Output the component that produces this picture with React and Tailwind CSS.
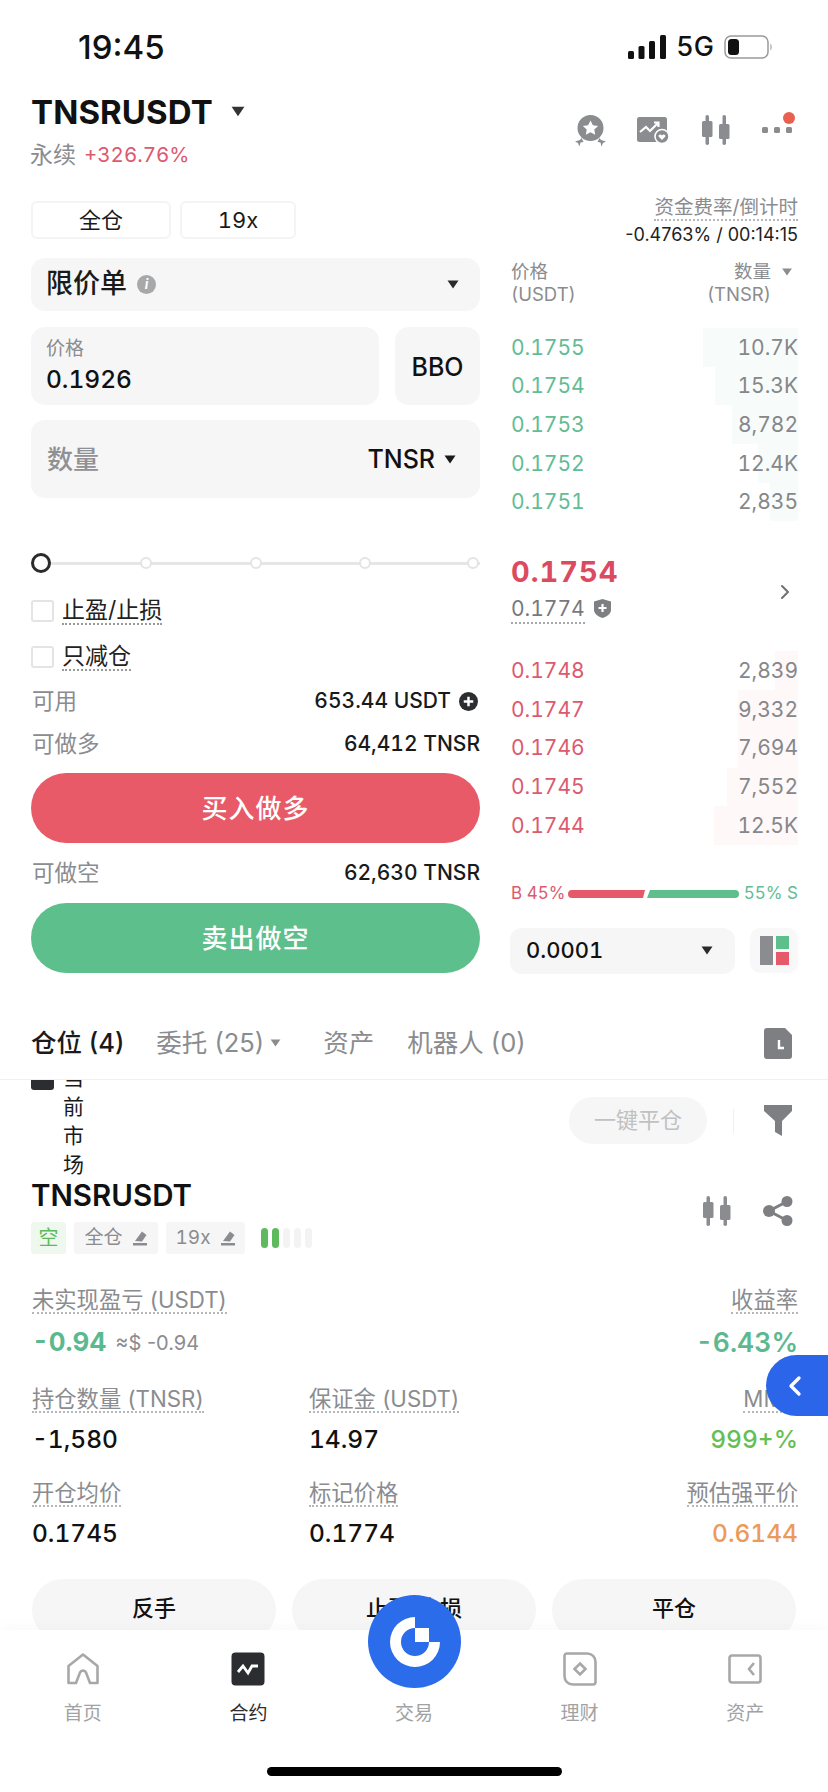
import { ChevronLeft, ChevronRight } from 'lucide-react';

const askRows = [
  ['0.1755', '10.7K', 'w-[95px]'],
  ['0.1754', '15.3K', 'w-[83px]'],
  ['0.1753', '8,782', 'w-[66px]'],
  ['0.1752', '12.4K', 'w-[40px]'],
  ['0.1751', '2,835', 'w-[28px]'],
];

const bidRows = [
  ['0.1748', '2,839', 'w-[23px]'],
  ['0.1747', '9,332', 'w-[60px]'],
  ['0.1746', '7,694', 'w-[60px]'],
  ['0.1745', '7,552', 'w-[71px]'],
  ['0.1744', '12.5K', 'w-[84px]'],
];

const Tri = ({ className }) => (
  <svg viewBox="0 0 12 9" className={className}>
    <path d="M0.5 0.5H11.5L6 8.5Z" fill="currentColor" />
  </svg>
);

const Candles = ({ className }) => (
  <svg viewBox="0 0 32 30" className={className} fill="#8a8c8f">
    <rect x="5.5" y="0" width="3.5" height="30" rx="1.7" />
    <rect x="2" y="6" width="10.5" height="16" rx="1.5" />
    <rect x="22.5" y="0" width="3.5" height="30" rx="1.7" />
    <rect x="19" y="9" width="10.5" height="15" rx="1.5" />
  </svg>
);

const Pen = () => (
  <svg viewBox="0 0 16 16" className="w-[16px] h-[16px]" fill="#8a8c8f">
    <path d="M3 11L10 1.5L14.5 5L10 11.5Z" />
    <rect x="1" y="13" width="14" height="2.5" />
  </svg>
);

const Label = ({ children }) => (
  <span className="h-[28px] inline-block leading-[27px] text-[22.3px] normal-nums text-[#8a8c8f] border-b-2 border-dotted border-[#b5b7ba]">
    {children}
  </span>
);

function StatusBar() {
  return (
    <div className="h-[88px] flex items-start justify-between pl-[78px] pr-[56px] pt-[27px]">
      <span className="text-[33px] leading-[40px] font-medium normal-nums text-[#111]">19:45</span>
      <div className="flex items-center gap-[10px] h-[40px]">
        <svg viewBox="0 0 38 24" className="w-[38px] h-[24px]" fill="#111">
          <rect x="0" y="16" width="6" height="8" rx="1.5" />
          <rect x="10.5" y="11" width="6" height="13" rx="1.5" />
          <rect x="21" y="6" width="6" height="18" rx="1.5" />
          <rect x="32" y="0" width="6" height="24" rx="1.5" />
        </svg>
        <span className="text-[27px] leading-[40px] font-medium text-[#111]">5G</span>
        <svg viewBox="0 0 48 24" className="w-[48px] h-[24px]">
          <rect x="1" y="1" width="43" height="22" rx="6" fill="none" stroke="#9a9a9a" strokeWidth="1.5" />
          <rect x="4" y="4" width="11" height="16" rx="3.5" fill="#111" />
          <path d="M46.5 8.5c1.5 1 1.5 6 0 7Z" fill="#9a9a9a" />
        </svg>
      </div>
    </div>
  );
}

function Header() {
  return (
    <div className="h-[108px] flex justify-between pl-[31px] pr-[36px]">
      <div className="pt-[1px]">
        <div className="flex items-center gap-[18px] h-[46px]">
          <span className="text-[33px] leading-[46px] font-bold text-[#111] tracking-[0.1px]">TNSRUSDT</span>
          <Tri className="w-[14px] h-[11px] text-[#333] -mt-[2px]" />
        </div>
        <div className="flex items-center gap-[8px] h-[40px] -ml-[1px]">
          <span className="text-[23px] text-[#8a8c8f]">永续</span>
          <span className="text-[20.5px] text-[#dc5a6e]">+326.76%</span>
        </div>
      </div>
      <div className="flex items-start pt-[25px]">
        <svg viewBox="0 0 33 33" className="w-[33px] h-[33px] mt-[2px]" fill="#8a8c8f">
          <circle cx="16.5" cy="13" r="13" />
          <path d="M16.5 5.5l2.4 4.8 5.2.7-3.8 3.6.9 5.2-4.7-2.5-4.7 2.5.9-5.2-3.8-3.6 5.2-.7Z" fill="#fff" />
          <path d="M1 26.5l5-1.5 1.5-2 2 4-3 .5-1 4-1.5-3.5ZM32 26.5l-5-1.5-1.5-2-2 4 3 .5 1 4 1.5-3.5Z" />
        </svg>
        <svg viewBox="0 0 33 27" className="w-[33px] h-[27px] ml-[30px] mt-[4px]">
          <rect x="0" y="0" width="30" height="25" rx="2.5" fill="#8a8c8f" />
          <path d="M3 15l6-5 4 4 8-8M17 5.5h4.5V10" fill="none" stroke="#fff" strokeWidth="2.2" />
          <circle cx="25" cy="19.5" r="7" fill="#8a8c8f" stroke="#fff" strokeWidth="1.6" />
          <path d="M25 23l-3.2-3.2c-1.2-1.6 1.6-3.2 3.2-1.4 1.6-1.8 4.4-.2 3.2 1.4Z" fill="#fff" />
        </svg>
        <Candles className="w-[32px] h-[30px] ml-[30px] mt-[2px]" />
        <div className="relative ml-[30px] w-[30px] h-[30px]">
          <div className="flex gap-[6px] mt-[14px]">
            <span className="w-[6px] h-[6px] rounded-[1.5px] bg-[#8a8c8f]" />
            <span className="w-[6px] h-[6px] rounded-[1.5px] bg-[#8a8c8f]" />
            <span className="w-[6px] h-[6px] rounded-[1.5px] bg-[#8a8c8f]" />
          </div>
          <span className="absolute left-[21px] -top-[1px] w-[12px] h-[12px] rounded-full bg-[#e8604f]" />
        </div>
      </div>
    </div>
  );
}

const Check = ({ children }) => (
  <div className="flex items-center h-[22px] gap-[8px]">
    <span className="w-[23px] h-[22px] rounded-[3px] border-2 border-[#e4e4e4] bg-white" />
    <span className="h-[27px] leading-[25px] text-[23px] text-[#222] border-b-2 border-dotted border-[#9a9a9a]">{children}</span>
  </div>
);

const InfoRow = ({ label, value, extra, className }) => (
  <div className={`flex items-center justify-between h-[30px] ${className}`}>
    <span className="text-[22.5px] text-[#8a8c8f] pl-[1px]">{label}</span>
    <div className="flex items-center gap-[8px]">
      <span className="text-[21px] font-medium text-[#1a1a1a]">{value}</span>
      {extra}
    </div>
  </div>
);

function OrderForm() {
  return (
    <div className="w-[449px] shrink-0 pt-[5px]">
      <div className="flex gap-[9px]">
        <div className="w-[140px] h-[38px] rounded-[6px] border-2 border-[#f4f4f4] flex items-center justify-center text-[22px] text-[#1a1a1a]">全仓</div>
        <div className="w-[116px] h-[38px] rounded-[6px] border-2 border-[#f4f4f4] flex items-center justify-center text-[22px] text-[#1a1a1a]">19x</div>
      </div>
      <div className="mt-[19px] h-[53px] rounded-[14px] bg-[#f6f6f6] flex items-center justify-between pl-[15px] pr-[21px]">
        <div className="flex items-center gap-[10px]">
          <span className="text-[27px] font-medium text-[#1a1a1a]">限价单</span>
          <span className="w-[19px] h-[19px] rounded-full bg-[#a6a8aa] text-white text-[13px] italic font-bold flex items-center justify-center">i</span>
        </div>
        <Tri className="w-[12px] h-[9px] text-[#2a2a2a]" />
      </div>
      <div className="mt-[16px] flex gap-[16px]">
        <div className="w-[348px] h-[78px] rounded-[14px] bg-[#f6f6f6] pl-[15px] pt-[9px]">
          <div className="text-[19px] leading-[26px] text-[#8a8c8f]">价格</div>
          <div className="mt-[2px] text-[24.5px] leading-[30px] font-medium text-[#111]">0.1926</div>
        </div>
        <div className="flex-1 h-[78px] pt-[3px] rounded-[14px] bg-[#f6f6f6] flex items-center justify-center text-[25px] font-medium text-[#111]">BBO</div>
      </div>
      <div className="mt-[15px] h-[78px] rounded-[14px] bg-[#f6f6f6] flex items-center justify-between pl-[16px] pr-[24px]">
        <span className="text-[26px] font-medium text-[#8f9194]">数量</span>
        <div className="flex items-center gap-[9px] pt-[1px]">
          <span className="text-[25px] font-medium text-[#111]">TNSR</span>
          <Tri className="w-[12px] h-[9px] text-[#1a1a1a]" />
        </div>
      </div>
      {/* slider */}
      <div className="relative mt-[55px] h-[20px] flex items-center">
        <div className="w-full h-[3px] bg-[#e6e6e6]" />
        <span className="absolute left-0 top-0 w-[20px] h-[20px] rounded-full border-[3px] border-[#2b2b2b] bg-white" />
        <span className="absolute left-[109px] top-[4px] w-[12px] h-[12px] rounded-full border-2 border-[#e4e4e4] bg-white" />
        <span className="absolute left-[219px] top-[4px] w-[12px] h-[12px] rounded-full border-2 border-[#e4e4e4] bg-white" />
        <span className="absolute left-[328px] top-[4px] w-[12px] h-[12px] rounded-full border-2 border-[#e4e4e4] bg-white" />
        <span className="absolute left-[436px] top-[4px] w-[12px] h-[12px] rounded-full border-2 border-[#e4e4e4] bg-white" />
      </div>
      <div className="mt-[27px]"><Check>止盈/止损</Check></div>
      <div className="mt-[24px]"><Check>只减仓</Check></div>
      <InfoRow
        className="mt-[18px]"
        label="可用"
        value="653.44 USDT"
        extra={
          <svg viewBox="0 0 20 20" className="w-[19px] h-[19px] mr-[2px]">
            <circle cx="10" cy="10" r="10" fill="#2b2d30" />
            <path d="M10 5v10M5 10h10" stroke="#fff" strokeWidth="2.6" />
          </svg>
        }
      />
      <InfoRow className="mt-[13px]" label="可做多" value="64,412 TNSR" />
      <div className="mt-[14px] h-[70px] pt-[1px] rounded-full bg-[#e85a68] flex items-center justify-center text-[26px] font-medium text-white tracking-[1px]">买入做多</div>
      <InfoRow className="mt-[15px]" label="可做空" value="62,630 TNSR" />
      <div className="mt-[15px] h-[70px] rounded-full bg-[#5dbf8b] flex items-center justify-center text-[26px] font-medium text-white tracking-[1px]">卖出做空</div>
    </div>
  );
}

const BookRow = ({ row, text, fill }) => (
  <div className="relative h-[38.7px] flex items-center justify-between">
    <span className={`absolute right-0 top-0 bottom-0 ${row[2]} ${fill}`} />
    <span className={`relative text-[21px] ${text}`}>{row[0]}</span>
    <span className="relative text-[21px] text-[#85878a]">{row[1]}</span>
  </div>
);

function OrderBook() {
  return (
    <div className="flex-1">
      <div className="h-[54px] text-right">
        <div className="flex justify-end h-[26px]">
          <span className="h-[25px] leading-[23px] text-[19.5px] text-[#8a8c8f] border-b-2 border-dotted border-[#b5b7ba]">资金费率/倒计时</span>
        </div>
        <div className="text-[18px] leading-[26px] normal-nums text-[#222]">-0.4763% / 00:14:15</div>
      </div>
      <div className="mt-[10px] h-[68px] flex justify-between pr-[27px] text-[18.5px] leading-[23px] text-[#8a8c8f]">
        <div>
          <div>价格</div>
          <div>(USDT)</div>
        </div>
        <div className="text-right">
          <div className="flex items-center justify-end gap-[10px] h-[23px] -mr-[22px]">
            数量
            <Tri className="w-[12px] h-[8px] text-[#8a8c8f]" />
          </div>
          <div>(TNSR)</div>
        </div>
      </div>
      {askRows.map((row) => (
        <BookRow key={row[0]} row={row} text="text-[#62bc94]" fill="bg-[#f7fcfa]" />
      ))}
      <div className="h-[130px] pt-[12px] flex items-center justify-between pr-[5px]">
        <div className="-mt-[7px]">
          <div className="text-[29px] leading-[38px] font-bold tracking-[1px] text-[#dc4a60]">0.1754</div>
          <div className="flex items-center gap-[9px] mt-[4px]">
            <span className="h-[29px] leading-[27px] text-[21px] text-[#77797c] border-b-2 border-dotted border-[#a5a7aa]">0.1774</span>
            <svg viewBox="0 0 17 19" className="w-[17px] h-[19px] -mt-[3px]">
              <path d="M8.5 0L17 2.5V11C17 15 12 18 8.5 19C5 18 0 15 0 11V2.5Z" fill="#7d7f82" />
              <path d="M8.5 5v8M4.5 9h8" stroke="#fff" strokeWidth="2.2" />
            </svg>
          </div>
        </div>
        <ChevronRight className="w-[24px] h-[28px] text-[#6f7174] -mr-[4px]" strokeWidth={2} />
      </div>
      {bidRows.map((row) => (
        <BookRow key={row[0]} row={row} text="text-[#dc5a6e]" fill="bg-[#fef8f8]" />
      ))}
      <div className="mt-[34px] h-[30px] flex items-center text-[17px] whitespace-nowrap">
        <span className="text-[#dc5a6e] w-[57px] shrink-0">B 45%</span>
        <svg viewBox="0 0 171 8" className="w-[171px] h-[8px] shrink-0">
          <path d="M4 0H77L75 8H4A4 4 0 0 1 4 0Z" fill="#e5596a" />
          <path d="M82 0H167A4 4 0 0 1 167 8H79Z" fill="#5dbf8b" />
        </svg>
        <span className="text-[#62bc94] flex-1 text-right">55% S</span>
      </div>
      <div className="mt-[19px] flex gap-[15px]">
        <div className="w-[225px] h-[46px] -ml-[1px] rounded-[12px] bg-[#f6f6f6] flex items-center justify-between pl-[16px] pr-[22px]">
          <span className="text-[22px] font-medium text-[#111]">0.0001</span>
          <Tri className="w-[12px] h-[9px] text-[#2a2a2a]" />
        </div>
        <div className="w-[48px] h-[45px] rounded-[10px] bg-[#f8f8f8] flex items-center justify-center">
          <div className="flex gap-[3px]">
            <span className="w-[13px] h-[29px] bg-[#8a8c8f]" />
            <div className="flex flex-col gap-[3px]">
              <span className="w-[13px] h-[13px] bg-[#5dbf8b]" />
              <span className="w-[13px] h-[13px] bg-[#e5596a]" />
            </div>
          </div>
        </div>
      </div>
    </div>
  );
}

function Tabs() {
  return (
    <div className="h-[106px] pt-[39px] pl-[31px] pr-[36px] border-b border-[#f0f0f0] flex justify-between">
      <div className="flex items-center h-[60px] text-[25.5px] normal-nums text-[#8a8c8f]">
        <span className="font-medium text-[#1a1a1a]">仓位 (4)</span>
        <span className="ml-[32px]">委托 (25)</span>
        <Tri className="w-[11px] h-[8px] ml-[6px]" />
        <span className="ml-[42px]">资产</span>
        <span className="ml-[33px]">机器人 (0)</span>
      </div>
      <svg viewBox="0 0 28 31" className="w-[28px] h-[31px] mt-[15px]">
        <path d="M3 0H21L28 7V28A3 3 0 0 1 25 31H3A3 3 0 0 1 0 28V3A3 3 0 0 1 3 0Z" fill="#7d7f82" />
        <path d="M15 12V20H20" fill="none" stroke="#fff" strokeWidth="2.4" />
      </svg>
    </div>
  );
}

function Stat({ label, value, color = 'text-[#111]', right, className = '' }) {
  return (
    <div className={`flex flex-col ${right ? 'items-end' : 'items-start'} ${className}`}>
      <Label>{label}</Label>
      <div className={`mt-[6px] text-[24.5px] leading-[40px] font-medium ${color}`}>{value}</div>
    </div>
  );
}

function Position() {
  return (
    <div className="flex-1 min-h-0 overflow-hidden">
      <div className="-mt-[17px] pl-[31px] pr-[30px]">
        <div className="flex items-center h-[116px]">
          <span className="self-start mt-[5px] w-[23px] h-[22px] rounded-[3px] bg-[#2b2d30]" />
          <span className="self-start ml-[9px] w-[22px] text-[21px] leading-[29px] text-[#1a1a1a]">当前市场</span>
          <div className="ml-auto flex items-center">
            <div className="w-[138px] h-[47px] rounded-full bg-[#f6f6f6] flex items-center justify-center text-[22px] text-[#bfc1c3]">一键平仓</div>
            <span className="ml-[26px] w-[1px] h-[24px] bg-[#f0f0f0]" />
            <svg viewBox="0 0 28 31" className="w-[28px] h-[31px] ml-[30px] mr-[6px]" fill="#7d7f82">
              <path d="M0 0H28V6L18 16V31L11 27V16L0 6Z" />
            </svg>
          </div>
        </div>
        <div className="flex justify-between">
          <div>
            <div className="h-[32px] text-[29.5px] leading-[32px] font-semibold text-[#111]">TNSRUSDT</div>
            <div className="mt-[11px] flex items-center gap-[8px] h-[32px]">
              <span className="w-[35px] h-[32px] rounded-[3px] bg-[#eef8ee] flex items-center justify-center text-[20px] text-[#5dbb5d]">空</span>
              <span className="w-[84px] h-[32px] rounded-[3px] bg-[#f6f6f6] flex items-center justify-center gap-[9px] text-[19px] text-[#8a8c8f]">全仓<Pen /></span>
              <span className="w-[79px] h-[32px] rounded-[3px] bg-[#f6f6f6] flex items-center justify-center gap-[9px] text-[19px] text-[#8a8c8f]">19x<Pen /></span>
              <div className="ml-[8px] flex gap-[4px]">
                <span className="w-[7px] h-[20px] rounded-full bg-[#5dbb5d]" />
                <span className="w-[7px] h-[20px] rounded-full bg-[#5dbb5d]" />
                <span className="w-[7px] h-[20px] rounded-full bg-[#f3f3f3]" />
                <span className="w-[7px] h-[20px] rounded-full bg-[#f3f3f3]" />
                <span className="w-[7px] h-[20px] rounded-full bg-[#f3f3f3]" />
              </div>
            </div>
          </div>
          <div className="flex mt-[17px] h-[30px]">
            <Candles className="w-[32px] h-[30px]" />
            <svg viewBox="0 0 30 30" className="w-[30px] h-[30px] ml-[30px] mr-[5px]">
              <path d="M24 5.5L6 15L24 24.5" fill="none" stroke="#7d7f82" strokeWidth="3" />
              <circle cx="24" cy="5.5" r="5.5" fill="#7d7f82" />
              <circle cx="6" cy="15" r="6" fill="#7d7f82" />
              <circle cx="24" cy="24.5" r="5.5" fill="#7d7f82" />
            </svg>
          </div>
        </div>
        {/* pnl */}
        <div className="mt-[32px] flex justify-between pl-[1px]">
          <div>
            <Label>未实现盈亏 (USDT)</Label>
            <div className="mt-[8px] flex items-center h-[40px]">
              <span className="text-[26px] font-bold text-[#5cb98f]">-0.94</span>
              <span className="ml-[9px] mt-[3px] text-[20px] normal-nums text-[#8a8c8f]">≈$ -0.94</span>
            </div>
          </div>
          <div className="flex flex-col items-end">
            <Label>收益率</Label>
            <div className="mt-[8px] text-[26.5px] leading-[40px] font-semibold text-[#5cb98f]">-6.43%</div>
          </div>
        </div>
        <div className="mt-[23px] grid grid-cols-[277px_1fr_auto] pl-[1px]">
          <Stat label="持仓数量 (TNSR)" value="-1,580" />
          <Stat label="保证金 (USDT)" value="14.97" />
          <Stat label="MMR" value="999+%" color="text-[#66bf52]" right />
          <Stat label="开仓均价" value="0.1745" className="mt-[20px]" />
          <Stat label="标记价格" value="0.1774" className="mt-[20px]" />
          <Stat label="预估强平价" value="0.6144" color="text-[#ec9a5c]" right className="mt-[20px]" />
        </div>
        <div className="mt-[26px] pl-[1px] pr-[2px] grid grid-cols-3 gap-[16px]">
          <div className="h-[62px] rounded-full bg-[#f6f6f6] flex items-center justify-center text-[22px] font-medium text-[#111] pb-[3px]">反手</div>
          <div className="h-[62px] rounded-full bg-[#f6f6f6] flex items-center justify-center text-[22px] font-medium text-[#111] pb-[3px]">止盈/止损</div>
          <div className="h-[62px] rounded-full bg-[#f6f6f6] flex items-center justify-center text-[22px] font-medium text-[#111] pb-[3px]">平仓</div>
        </div>
      </div>
    </div>
  );
}

const navIcons = {
  home: (
    <svg viewBox="0 0 34 34" className="w-[34px] h-[34px]" fill="none" stroke="#a8a8a8" strokeWidth="2.6" strokeLinejoin="round">
      <path d="M17 2.5L31.5 14V31H24L20 20.5C19 18 15 18 14 20.5L10 31H2.5V14Z" />
    </svg>
  ),
  contract: (
    <svg viewBox="0 0 34 34" className="w-[34px] h-[34px]">
      <rect x="0.5" y="0.5" width="33" height="33" rx="4" fill="#2b2d30" />
      <path d="M7 20l5-6 5 7 4-7h6" fill="none" stroke="#fff" strokeWidth="2.8" />
    </svg>
  ),
  earn: (
    <svg viewBox="0 0 34 34" className="w-[34px] h-[34px]" fill="none" stroke="#a8a8a8" strokeWidth="2.6">
      <path d="M4 1.5H24C29 1.5 32.5 5 32.5 10V30C32.5 32 31.5 32.5 30 32.5H10C5 32.5 1.5 29 1.5 24V4C1.5 2.5 2.5 1.5 4 1.5Z" />
      <path d="M17 11.5L22.5 17L17 22.5L11.5 17Z" />
    </svg>
  ),
  assets: (
    <svg viewBox="0 0 34 30" className="w-[34px] h-[30px]" fill="none" stroke="#a8a8a8" strokeWidth="2.6">
      <rect x="1.5" y="1.5" width="31" height="27" rx="2.5" />
      <path d="M26 9L21 15L26 21" />
    </svg>
  ),
};

const NavItem = ({ icon, label, active }) => (
  <div className="flex flex-col items-center">
    <div className="h-[34px] flex items-center justify-center">{icon}</div>
    <span className={`mt-[13px] text-[19px] leading-[30px] ${active ? 'text-[#2b2d30]' : 'text-[#a0a2a4]'}`}>{label}</span>
  </div>
);

function BottomNav() {
  return (
    <div className="relative h-[162px] shrink-0 bg-white pt-[22px] shadow-[0_-6px_10px_rgba(0,0,0,0.02)]">
      <div className="grid grid-cols-5">
        <NavItem icon={navIcons.home} label="首页" />
        <NavItem icon={navIcons.contract} label="合约" active />
        <NavItem label="交易" />
        <NavItem icon={navIcons.earn} label="理财" />
        <NavItem icon={navIcons.assets} label="资产" />
      </div>
      <div className="mt-[38px] mx-auto w-[295px] h-[9px] rounded-full bg-black" />
      <div className="absolute left-[368px] -top-[35px] w-[93px] h-[93px] rounded-full bg-[#2b6cea] flex items-center justify-center">
        <svg viewBox="0 0 50 50" className="w-[50px] h-[50px]" fill="#fff">
          <path d="M25 0A25 25 0 1 0 50 25H39A14 14 0 1 1 25 11Z" />
          <rect x="25" y="11" width="14" height="14" />
        </svg>
      </div>
    </div>
  );
}

export default function App() {
  return (
    <div className="relative w-[828px] h-[1792px] overflow-hidden bg-white flex flex-col tabular-nums font-[Inter,'Noto_Sans_CJK_SC',sans-serif]">
      <StatusBar />
      <Header />
      <div className="flex gap-[31px] pl-[31px] pr-[30px]">
        <OrderForm />
        <OrderBook />
      </div>
      <Tabs />
      <Position />
      <BottomNav />
      {/* floating side tab */}
      <div className="absolute right-0 top-[1355px] w-[62px] h-[61px] rounded-l-full bg-[#2b66ea] flex items-center pl-[13px]">
        <ChevronLeft className="w-[32px] h-[32px] text-white" strokeWidth={2.5} />
      </div>
    </div>
  );
}
